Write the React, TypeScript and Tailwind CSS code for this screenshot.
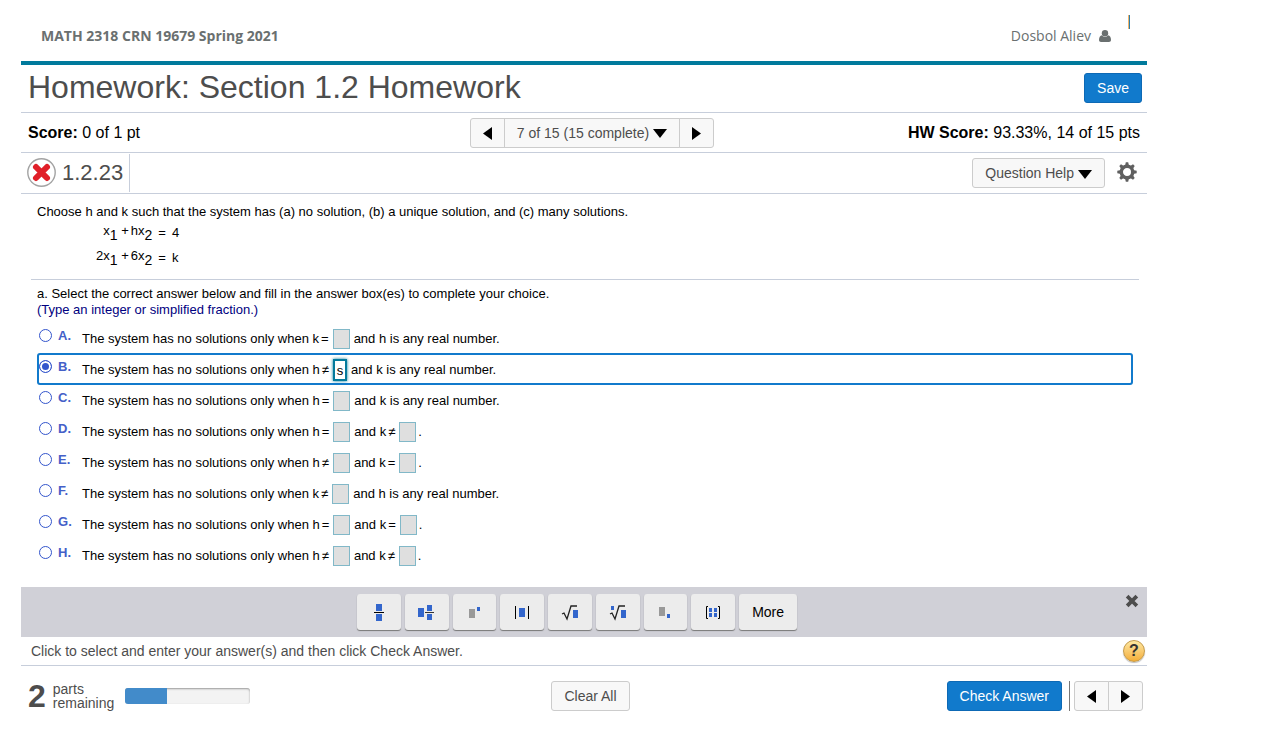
import clsx from "clsx";
import { useState } from "react";
import type { ReactNode } from "react";

interface Choice {
  letter: string;
  first: string;
  firstOp: string;
  second: string;
  secondOp?: string;
}

const STEM = "The system has no solutions only when";

const choices: Choice[] = [
  { letter: "A", first: "k", firstOp: "=", second: "and h is any real number." },
  { letter: "B", first: "h", firstOp: "≠", second: "and k is any real number." },
  { letter: "C", first: "h", firstOp: "=", second: "and k is any real number." },
  { letter: "D", first: "h", firstOp: "=", second: "and k", secondOp: "≠" },
  { letter: "E", first: "h", firstOp: "≠", second: "and k", secondOp: "=" },
  { letter: "F", first: "k", firstOp: "≠", second: "and h is any real number." },
  { letter: "G", first: "h", firstOp: "=", second: "and k", secondOp: "=" },
  { letter: "H", first: "h", firstOp: "≠", second: "and k", secondOp: "≠" },
];

const greyButton =
  "flex h-[30px] items-center justify-center border border-[#cccccc] bg-[#f8f8f8] text-sm text-[#4d4d4d]";
const blueButton =
  "flex h-[30px] items-center justify-center rounded-[3px] border border-[#0d69b5] bg-[#117acc] px-3 text-sm text-white";

const Arrow = ({ dir }: { dir: "left" | "right" | "down" }) => {
  if (dir === "down") {
    return (
      <svg width="14" height="11" viewBox="0 0 14 11" aria-hidden="true">
        <path d="M0 2h14L7 11z" fill="#000" />
      </svg>
    );
  }
  return (
    <svg width="9" height="16" viewBox="0 0 9 16" aria-hidden="true">
      <path d={dir === "left" ? "M9 2v13L0 8.500z" : "M0 2v13l9-6.500z"} fill="#000" />
    </svg>
  );
};

const UserIcon = () => (
  <svg width="12" height="12" viewBox="0 0 12 12" fill="#6a7070" aria-hidden="true" className="mt-[30px] ml-2">
    <circle cx="6" cy="3.2" r="3.2" />
    <path d="M3 5.300C1 5.300 0 7.500 0 10c0 1.200.8 2 2 2h8c1.200 0 2-.8 2-2 0-2.500-1-4.700-3-4.700C8.200 6.300 7.200 6.900 6 6.900S3.800 6.300 3 5.300z" />
  </svg>
);

const WrongIcon = () => (
  <svg width="30" height="30" viewBox="0 0 30 30" role="img" aria-label="Incorrect">
    <circle cx="15.500" cy="14.500" r="13.700" fill="#fff" stroke="#a3a3a3" strokeWidth="1.4" />
    <path d="M10 9l11 11M21 9l-11 11" stroke="#e01f28" strokeWidth="6" strokeLinecap="round" />
  </svg>
);

const GearIcon = () => (
  <svg width="20" height="20" viewBox="0 0 20 20" fill="#5f5f5f" aria-hidden="true">
    <circle cx="10" cy="10" r="5.700" fill="none" stroke="#5f5f5f" strokeWidth="3.400" />
    {[0, 45, 90, 135, 180, 225, 270, 315].map((angle) => (
      <path key={angle} d="M8 4L8.800 0.300h2.400L12 4z" transform={`rotate(${angle} 10 10)`} />
    ))}
  </svg>
);

const BLUE = "#3366cc";

const palette: { label: string; icon: ReactNode }[] = [
  {
    label: "Fraction",
    icon: (
      <>
        <path d="M9 1h6v7H9zM9 11h6v7H9z" fill={BLUE} />
        <path d="M7 9h10v1H7z" fill="#000" />
      </>
    ),
  },
  {
    label: "Mixed number",
    icon: (
      <>
        <path d="M3 5h6v9H3zM12 2h5v6h-5zM12 11h5v6h-5z" fill={BLUE} />
        <path d="M10 9h9v1h-9z" fill="#333" />
      </>
    ),
  },
  {
    label: "Exponent",
    icon: (
      <>
        <path d="M7 6h6v9H7z" fill="#999" />
        <path d="M15 4h3v4h-3z" fill={BLUE} />
      </>
    ),
  },
  {
    label: "Absolute value",
    icon: (
      <>
        <path d="M9 5h6v9H9z" fill={BLUE} />
        <path d="M5 3h1v13H5zM18 3h1v13h-1z" fill="#000" />
      </>
    ),
  },
  {
    label: "Square root",
    icon: (
      <>
        <path d="M15 7h5v8h-5z" fill={BLUE} />
        <path d="M4 11l2-1 3 6 4-13h6" fill="none" stroke="#222" strokeWidth="1.3" />
      </>
    ),
  },
  {
    label: "Root",
    icon: (
      <>
        <path d="M15 7h5v8h-5zM5 3h3v4H5z" fill={BLUE} />
        <path d="M4 11l2-1 3 6 4-13h6" fill="none" stroke="#222" strokeWidth="1.3" />
      </>
    ),
  },
  {
    label: "Subscript",
    icon: (
      <>
        <path d="M6 4h6v9H6z" fill="#999" />
        <path d="M14 11h3v4h-3z" fill={BLUE} />
      </>
    ),
  },
  {
    label: "Matrix",
    icon: (
      <>
        <path d="M8 5h3v4H8zM13 5h3v4h-3zM8 10h3v4H8zM13 10h3v4h-3z" fill={BLUE} />
        <path d="M7 3.500H5.500v12H7M17 3.500h1.500v12H17" fill="none" stroke="#000" />
      </>
    ),
  },
];

const Blank = ({ label, active }: { label: string; active?: boolean }) => (
  <input
    type="text"
    aria-label={label}
    defaultValue={active ? "s" : ""}
    className={clsx(
      "p-0 text-center text-[13px] outline-none",
      active
        ? "h-[22px] w-[14px] border-2 border-[#047a9c] bg-white shadow-[0_0_3px_#047a9c]"
        : "h-5 w-[17px] border border-[#81b8c8] bg-[#dfdfdf]"
    )}
  />
);

const ChoiceRow = ({
  choice,
  checked,
  onSelect,
}: {
  choice: Choice;
  checked: boolean;
  onSelect: () => void;
}) => {
  const id = `choice-${choice.letter}`;
  return (
    <div
      className={clsx(
        "flex items-start rounded-[3px]",
        checked ? "-mb-px h-8 shadow-[inset_0_0_0_2px_#117acc]" : "h-[31px]"
      )}
    >
      <input
        id={id}
        type="radio"
        name="answer"
        checked={checked}
        onChange={onSelect}
        className="mt-[7px] ml-0.5 size-[13px] appearance-none rounded-full border border-[#3355cc] bg-white checked:bg-[#3355cc] checked:shadow-[inset_0_0_0_2px_#fff]"
      />
      <label htmlFor={id} className="mt-1.5 ml-1.5 w-6 font-bold text-[#4460c8]">
        {choice.letter}.
      </label>
      <div className="mt-1.5 flex h-[22px] items-center gap-0.5">
        <span>
          {STEM} {choice.first}
        </span>
        <span>{choice.firstOp}</span>
        <span className="mx-0.5 flex">
          <Blank label={`${choice.letter}, value of ${choice.first}`} active={checked} />
        </span>
        <span>{choice.second}</span>
        {choice.secondOp && (
          <>
            <span>{choice.secondOp}</span>
            <span className="ml-0.5 flex">
              <Blank label={`${choice.letter}, value of k`} />
            </span>
            <span>.</span>
          </>
        )}
      </div>
    </div>
  );
};

const Equation = ({ a, b, value }: { a: string; b: string; value: string }) => (
  <tr className="h-[25px]">
    <td className="text-right leading-4">
      {a}x<sub className="static align-[-5px] text-sm leading-none">1</sub> +<span className="ml-0.5">{b}</span>x
      <sub className="static align-[-5px] text-sm leading-none">2</sub>
    </td>
    <td className="px-1.5">=</td>
    <td>{value}</td>
  </tr>
);

export default function App() {
  const [selected, setSelected] = useState("B");

  return (
    <div className="mr-[135px] ml-[21px] bg-white font-['Liberation_Sans',Arial,sans-serif] text-black">
      <header className="flex h-[65px] items-start justify-between border-b-4 border-[#007a9c] pr-[17px] pl-5 font-['Open_Sans',sans-serif] text-sm text-[#6a7070]">
        <span className="mt-[26px] font-bold">MATH 2318 CRN 19679 Spring 2021</span>
        <div className="flex items-start">
          <span className="mt-[26px]">Dosbol Aliev</span>
          <UserIcon />
          <span className="mt-[15px] ml-[17px] h-[14px] w-0.5 border-r border-l border-r-[#2f7fa8] border-l-[#f2b46a]" />
        </div>
      </header>

      <div className="flex h-12 items-center justify-between border-b border-[#c7cedb] pr-[5px] pl-[7px]">
        <h1 className="pb-1 text-[32px] text-[#4d4d4d]">Homework: Section 1.2 Homework</h1>
        <button type="button" className={clsx(blueButton, "mb-0.5")}>
          Save
        </button>
      </div>

      <div className="grid h-10 grid-cols-[1fr_auto_1fr] items-center border-b border-[#c7cedb] px-[7px]">
        <div>
          <b>Score:</b> 0 of 1 pt
        </div>
        <nav className="flex pl-4" aria-label="Questions">
          <button type="button" aria-label="Previous question" className={clsx(greyButton, "w-[35px] rounded-l-[3px]")}>
            <Arrow dir="left" />
          </button>
          <button type="button" className={clsx(greyButton, "-mx-px gap-1 px-3")}>
            7 of 15 (15 complete)
            <Arrow dir="down" />
          </button>
          <button type="button" aria-label="Next question" className={clsx(greyButton, "w-[35px] rounded-r-[3px]")}>
            <Arrow dir="right" />
          </button>
        </nav>
        <div className="text-right">
          <b>HW Score:</b> 93.33%, 14 of 15 pts
        </div>
      </div>

      <div className="flex h-[41px] items-center border-b border-[#c7cedb] pr-2.5 pl-[5px]">
        <div className="flex h-[38px] items-center gap-1.5 border-r border-[#c7cedb] pr-1.5">
          <WrongIcon />
          <h2 className="pb-0.5 text-[22px] text-[#4d4d4d]">1.2.23</h2>
        </div>
        <button type="button" className={clsx(greyButton, "ml-auto gap-1 rounded-[3px] px-3")}>
          Question Help
          <Arrow dir="down" />
        </button>
        <button type="button" aria-label="Settings" className="mb-0.5 ml-3">
          <GearIcon />
        </button>
      </div>

      <main className="h-[393px] pt-[10px] pr-[14px] pl-4 text-[13px] leading-4">
        <p>Choose h and k such that the system has (a) no solution, (b) a unique solution, and (c) many solutions.</p>
        <table className="ml-[59px]">
          <tbody>
            <Equation a="" b="h" value="4" />
            <Equation a="2" b="6" value="k" />
          </tbody>
        </table>
        <hr className="mt-[9px] mr-[-6px] ml-[-6px] border-[#c7cedb]" />
        <p className="mt-1.5">a. Select the correct answer below and fill in the answer box(es) to complete your choice.</p>
        <p className="text-[#000080]">(Type an integer or simplified fraction.)</p>
        <div role="radiogroup" aria-label="Answer choices" className="mt-1">
          {choices.map((choice) => (
            <ChoiceRow
              key={choice.letter}
              choice={choice}
              checked={choice.letter === selected}
              onSelect={() => setSelected(choice.letter)}
            />
          ))}
        </div>
      </main>

      <div className="grid h-[50px] grid-cols-[1fr_auto_1fr] items-center bg-[#d0d0d7] pr-2">
        <div className="col-start-2 mr-1.5 flex w-[440px] gap-1">
          {palette.map((item) => (
            <button
              key={item.label}
              type="button"
              aria-label={item.label}
              className="flex h-9 flex-1 items-center justify-center rounded-[3px] bg-[#ececec] shadow-[0_1px_1px_#777]"
            >
              <svg width="24" height="19" viewBox="0 0 24 19">
                {item.icon}
              </svg>
            </button>
          ))}
          <button type="button" className="h-9 rounded-[3px] bg-[#ececec] px-[13px] text-sm shadow-[0_1px_1px_#777]">
            More
          </button>
        </div>
        <button type="button" aria-label="Close" className="mt-[7px] self-start justify-self-end">
          <svg width="14" height="14" viewBox="0 0 14 14">
            <path d="M3.500 3.500l7 7M10.500 3.500l-7 7" stroke="#4d4d4d" strokeWidth="3.800" strokeLinecap="square" />
          </svg>
        </button>
      </div>

      <div className="flex h-[29px] items-center justify-between border-b border-[#c7cedb] pr-0.5 pl-2.5 text-sm text-[#4d4d4d]">
        Click to select and enter your answer(s) and then click Check Answer.
        <button
          type="button"
          aria-label="Help"
          className="size-[22px] rounded-full border border-[#c49a4a] bg-linear-to-b from-[#fde8a0] to-[#f3ae35] text-base leading-5 font-bold text-[#333] shadow-[0_1px_1px_#bbb]"
        >
          ?
        </button>
      </div>

      <footer className="grid h-[60px] grid-cols-[1fr_auto_1fr] items-center pr-1 pl-[7px] text-[#4d4d4d]">
        <div className="flex items-center">
          <span className="text-[32px] font-bold">2</span>
          <span className="ml-[7px] text-sm leading-[14px]">
            parts
            <br />
            remaining
          </span>
          <div
            role="progressbar"
            aria-label="Parts completed"
            aria-valuenow={1}
            aria-valuemax={3}
            className="ml-[11px] h-4 w-[125px] overflow-hidden rounded-[3px] bg-[#f3f3f3] shadow-[inset_0_1px_2px_#999]"
          >
            <div className="h-full w-1/3 bg-[#428bca]" />
          </div>
        </div>
        <div className="pl-2.5">
          <button type="button" className={clsx(greyButton, "rounded-[3px] px-3")}>
            Clear All
          </button>
        </div>
        <div className="flex justify-end">
          <button type="button" className={blueButton}>
            Check Answer
          </button>
          <div className="ml-[7px] flex border-l border-[#777] pl-1">
            <button type="button" aria-label="Previous part" className={clsx(greyButton, "w-[35px] rounded-l-[3px]")}>
              <Arrow dir="left" />
            </button>
            <button type="button" aria-label="Next part" className={clsx(greyButton, "-ml-px w-[35px] rounded-r-[3px]")}>
              <Arrow dir="right" />
            </button>
          </div>
        </div>
      </footer>
    </div>
  );
}
